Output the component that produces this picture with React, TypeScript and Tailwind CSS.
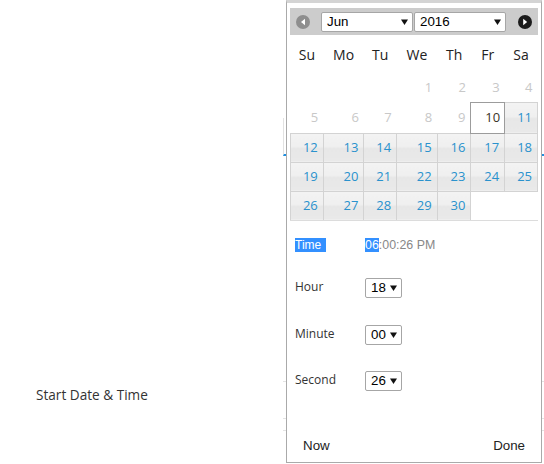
import React from 'react'

const SANS = "font-['Open_Sans',sans-serif]"
const ARIAL = "font-['Liberation_Sans',Arial,sans-serif]"

const COLS = ['w-[33px]', 'w-[41px]', 'w-[33px]', 'w-[41px]', 'w-[34px]', 'w-[34px]', 'w-[33px]']
const ROW_H = ['h-[29px]', 'h-[31px]', 'h-[29px]', 'h-[29px]', 'h-[29px]']
const DAYS = ['Su', 'Mo', 'Tu', 'We', 'Th', 'Fr', 'Sa']
const WEEKS: (number | null)[][] = [
  [null, null, null, 1, 2, 3, 4],
  [5, 6, 7, 8, 9, 10, 11],
  [12, 13, 14, 15, 16, 17, 18],
  [19, 20, 21, 22, 23, 24, 25],
  [26, 27, 28, 29, 30, null, null],
]
const TODAY = 10

function Arrow() {
  return (
    <svg width="7" height="6" viewBox="0 0 7 6" className="shrink-0">
      <path d="M0 0.5h7L3.5 6z" fill="#111" />
    </svg>
  )
}

function FakeSelect({ value, className }: { value: string; className: string }) {
  return (
    <div
      className={`flex h-[20px] items-center justify-between rounded-[2px] border border-[#a6a6a6] bg-white pl-[5px] pr-[4px] text-[13.33px] leading-none text-black ${ARIAL} ${className}`}
    >
      <span>{value}</span>
      <Arrow />
    </div>
  )
}

function NavIcon({ dir }: { dir: 'prev' | 'next' }) {
  const prev = dir === 'prev'
  return (
    <svg width="14" height="14" viewBox="0 0 14 14" className="shrink-0">
      <circle cx="7" cy="7" r="7" fill={prev ? '#8e8e8e' : '#1b1b1b'} />
      {prev ? <path d="M5 7l4-3.2v6.4z" fill="#fff" /> : <path d="M9.2 7L5.2 3.8v6.4z" fill="#fff" />}
    </svg>
  )
}

function DayCell({ day, h }: { day: number | null; h: string }) {
  if (day === null) return <td className={h} />
  if (day < TODAY)
    return <td className={`${h} pr-[5px] text-right text-[13px] text-[#c8c8c8]`}>{day}</td>
  if (day === TODAY)
    return (
      <td className={`${h} border border-[#9c9c9c] bg-white pr-[4px] text-right text-[13px] text-[#3a3328]`}>
        {day}
      </td>
    )
  return (
    <td
      className={`${h} border border-[#d3d3d3] bg-[linear-gradient(to_bottom,#f3f3f3_0%,#efefef_50%,#e7e7e7_52%,#e9e9e9_100%)] pr-[5px] text-right text-[13px] text-[#2a92cd]`}
    >
      {day}
    </td>
  )
}

function TimeRow({ label, value, h }: { label: string; value: string; h: string }) {
  return (
    <div className={`flex items-start ${h}`}>
      <span className={`w-[70px] pt-px text-[12px] leading-[16px] text-[#333] ${SANS}`}>{label}</span>
      <FakeSelect value={value} className="w-[37px]" />
    </div>
  )
}

export default function App() {
  return (
    <div className={`relative h-[464px] w-[544px] overflow-hidden bg-white ${SANS}`}>
      {/* form behind the picker */}
      <div className="pl-[283px] pt-[118px]">
        <div className="h-[38px] border-b-2 border-l border-[#e2e2e2] border-b-[#1e8fe0]" />
      </div>
      <div className="mt-[225px] flex">
        <div className="w-[283px] pl-[36px] pt-[5px] text-[13.6px] leading-[18px] text-[#333]">
          Start Date &amp; Time
        </div>
        <div className="flex-1">
          <div className="h-[38px] border-y border-[#e3e3e3]" />
          <div className="mt-[11px] border-t border-[#e3e3e3]" />
        </div>
      </div>

      {/* datepicker popup */}
      <div className="absolute left-[286px] top-0 flex h-[463px] w-[256px] flex-col border border-[#aaaaaa] border-t-[3px] border-t-[#d4d4d4] bg-white px-[3px] pt-[5px]">
        <div className="flex h-[27px] items-center bg-[#cccccc] px-[6px]">
          <NavIcon dir="prev" />
          <FakeSelect value="Jun" className="ml-[11px] w-[92px]" />
          <FakeSelect value="2016" className="ml-px w-[92px]" />
          <span className="ml-[12px]">
            <NavIcon dir="next" />
          </span>
        </div>

        <table className="border-collapse">
          <colgroup>
            {COLS.map((c, i) => (
              <col key={i} className={c} />
            ))}
          </colgroup>
          <thead>
            <tr>
              {DAYS.map(d => (
                <th key={d} className="h-[38px] text-center text-[14px] font-normal text-[#222]">
                  {d}
                </th>
              ))}
            </tr>
          </thead>
          <tbody>
            {WEEKS.map((w, i) => (
              <tr key={i}>
                {w.map((d, j) => (
                  <DayCell key={j} day={d} h={ROW_H[i]} />
                ))}
              </tr>
            ))}
          </tbody>
        </table>

        {/* time section */}
        <div className="-mt-px border-t border-[#dcdcdc] pl-[5px] pt-[17px]">
          <div className="flex h-[40px] items-start">
            <span className={`w-[70px] text-[12px] leading-[15px] ${ARIAL}`}>
              <span className="bg-[#3390ff] pr-[5px] text-white">Time</span>
            </span>
            <span className={`text-[12.4px] leading-[15px] text-[#888] ${ARIAL}`}>
              <span className="bg-[#3390ff] text-white">06</span>:00:26 PM
            </span>
          </div>
          <TimeRow label="Hour" value="18" h="h-[47px]" />
          <TimeRow label="Minute" value="00" h="h-[46px]" />
          <TimeRow label="Second" value="26" h="h-[20px]" />
        </div>

        <div className={`mt-auto flex justify-between px-[13px] pb-[8px] text-[13.33px] leading-[16px] text-[#222] ${ARIAL}`}>
          <span>Now</span>
          <span>Done</span>
        </div>
      </div>
    </div>
  )
}
